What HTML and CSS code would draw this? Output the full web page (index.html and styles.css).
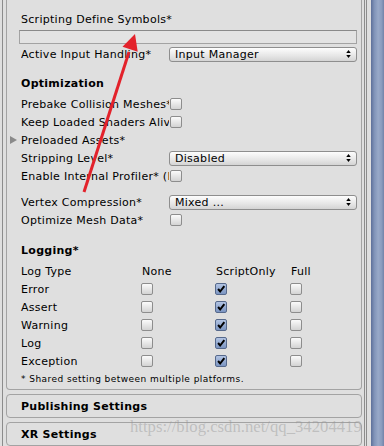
FILE: index.html
```html
<!DOCTYPE html>
<html lang="en">
<head>
    <meta charset="UTF-8">
    <title>Player Settings</title>
    <link rel="stylesheet" href="styles.css">
</head>
<body>
<div class="screen">
    <div class="inspector">
        <div class="panel main">
            <div class="row"><span class="label wide">Scripting Define Symbols*</span></div>
            <div class="textfield"></div>
            <div class="row">
                <span class="label">Active Input Handling*</span>
                <div class="popup">Input Manager<svg class="updown" viewBox="0 0 5 9"><polygon points="0,3.5 2.5,0 5,3.5"/><polygon points="0,5.5 2.5,9 5,5.5"/></svg></div>
            </div>

            <div class="header">Optimization</div>
            <div class="row"><span class="label">Prebake Collision Meshes*</span><span class="check"></span></div>
            <div class="row"><span class="label">Keep Loaded Shaders Alive*</span><span class="check"></span></div>
            <div class="row"><svg class="fold" viewBox="0 0 7 8"><polygon points="0,0 7,4 0,8"/></svg><span class="label">Preloaded Assets*</span></div>
            <div class="row">
                <span class="label">Stripping Level*</span>
                <div class="popup">Disabled<svg class="updown" viewBox="0 0 5 9"><polygon points="0,3.5 2.5,0 5,3.5"/><polygon points="0,5.5 2.5,9 5,5.5"/></svg></div>
            </div>
            <div class="row"><span class="label">Enable Internal Profiler* (Deprecated)</span><span class="check"></span></div>
            <div class="row gap">
                <span class="label">Vertex Compression*</span>
                <div class="popup">Mixed ...<svg class="updown" viewBox="0 0 5 9"><polygon points="0,3.5 2.5,0 5,3.5"/><polygon points="0,5.5 2.5,9 5,5.5"/></svg></div>
            </div>
            <div class="row"><span class="label">Optimize Mesh Data*</span><span class="check"></span></div>

            <div class="header logging">Logging*</div>
            <div class="logs">
                <span>Log Type</span><span class="col">None</span><span class="col">ScriptOnly</span><span class="col">Full</span>

                <span>Error</span><span class="check"></span><span class="check on"><svg viewBox="0 0 12 12"><path d="M2.5 6 L5 9 L10 2.5"/></svg></span><span class="check"></span>
                <span>Assert</span><span class="check"></span><span class="check on"><svg viewBox="0 0 12 12"><path d="M2.5 6 L5 9 L10 2.5"/></svg></span><span class="check"></span>
                <span>Warning</span><span class="check"></span><span class="check on"><svg viewBox="0 0 12 12"><path d="M2.5 6 L5 9 L10 2.5"/></svg></span><span class="check"></span>
                <span>Log</span><span class="check"></span><span class="check on"><svg viewBox="0 0 12 12"><path d="M2.5 6 L5 9 L10 2.5"/></svg></span><span class="check"></span>
                <span>Exception</span><span class="check"></span><span class="check on"><svg viewBox="0 0 12 12"><path d="M2.5 6 L5 9 L10 2.5"/></svg></span><span class="check"></span>
            </div>
            <div class="note">* Shared setting between multiple platforms.</div>
        </div>
        <div class="panel foldout">Publishing Settings</div>
        <div class="panel foldout">XR Settings</div>
    </div>
    <div class="scrollbar"></div>

    <svg class="arrow" viewBox="0 0 384 446">
        <line x1="84" y1="192" x2="129" y2="52"/>
        <polygon points="135,34 122.5,46.7 137.7,51.7"/>
    </svg>
    <div class="watermark">https://blog.csdn.net/qq_34204419</div>
</div>
</body>
</html>
```

FILE: styles.css
```css
body {
    margin: 0;
    background: #dfdfdf;
    font-family: "DejaVu Sans", sans-serif;
    font-size: 11px;
    letter-spacing: 0.28px;
    color: #000;
}

.screen {
    position: relative;
    display: flex;
    height: 446px;
    overflow: hidden;
}

.inspector {
    flex: 1;
    margin-left: 2px;
    margin-right: 4px;
    padding: 0 2px 0 3px;
    border-left: 1px solid #8c8c8c;
    border-right: 3px double #8c8c8c;
}

.scrollbar {
    width: 13px;
    flex: none;
    background: linear-gradient(to right, #5d7099 0, #8093b8 25%, #98a9c8 55%, #8c9dbf 80%, #7283a9 100%);
}

.panel {
    border: 1px solid #a3a3a3;
    border-radius: 4px;
    padding: 0 4px 0 14px;
}

.main {
    border-top: none;
    border-radius: 0 0 4px 4px;
    padding-top: 10px;
    padding-bottom: 3px;
}

.row {
    display: flex;
    align-items: center;
    height: 18px;
}

.row.gap {
    margin-top: 8px;
}

.label {
    width: 148px;
    flex: none;
    overflow: hidden;
    white-space: nowrap;
}

.label.wide {
    width: auto;
}

.fold {
    width: 7px;
    height: 8px;
    flex: none;
    margin-left: -11px;
    margin-right: 4px;
    fill: #8a8a8a;
}

.textfield {
    height: 14px;
    box-sizing: border-box;
    margin: 2px 0 1px -2px;
    border: 1px solid #a3a3a3;
    border-top-color: #8a8a8a;
    background: #e3e3e3;
}

.popup {
    flex: 1;
    height: 15px;
    box-sizing: border-box;
    display: flex;
    align-items: center;
    justify-content: space-between;
    padding: 0 5px;
    border: 1px solid #8e8e8e;
    border-radius: 3px;
    background: linear-gradient(#fdfdfd, #e6e6e6 60%, #d4d4d4);
    line-height: 13px;
}

.updown {
    width: 5px;
    height: 8px;
}

.check {
    display: inline-block;
    width: 12px;
    height: 12px;
    box-sizing: border-box;
    margin-left: 1px;
    border: 1px solid #8d8d8d;
    border-radius: 2px;
    background: linear-gradient(#fbfbfb, #d3d3d3);
}

.check.on {
    border-color: #56698c;
    background: linear-gradient(#b2c4e3, #7b95c2);
}

.check svg {
    display: block;
    width: 10px;
    height: 10px;
    fill: none;
    stroke: #000;
    stroke-width: 2.4;
}

.header {
    height: 18px;
    line-height: 18px;
    margin: 12px 0 2px;
    font-weight: bold;
}

.header.logging {
    margin-top: 13px;
}

.logs {
    display: grid;
    grid-template-columns: 120px 74px 75px 1fr;
    grid-auto-rows: 18px;
    align-items: center;
}

.logs .col {
    padding-left: 1px;
}

.logs .check {
    margin-left: 0;
}

.note {
    height: 14px;
    line-height: 14px;
    margin-top: 2px;
    font-size: 9px;
    letter-spacing: 0.45px;
}

.foldout {
    height: 24px;
    box-sizing: border-box;
    margin-top: 4px;
    display: flex;
    align-items: center;
    font-weight: bold;
}

.arrow {
    position: absolute;
    left: 0;
    top: 0;
    width: 384px;
    height: 446px;
    pointer-events: none;
}

.arrow line {
    stroke: #e3222b;
    stroke-width: 3;
}

.arrow polygon {
    fill: #e3222b;
}

.watermark {
    position: absolute;
    left: 130px;
    top: 417px;
    font-family: "Liberation Serif", serif;
    font-size: 16.7px;
    letter-spacing: 0;
    color: rgba(150, 150, 150, 0.45);
    white-space: nowrap;
}
```
